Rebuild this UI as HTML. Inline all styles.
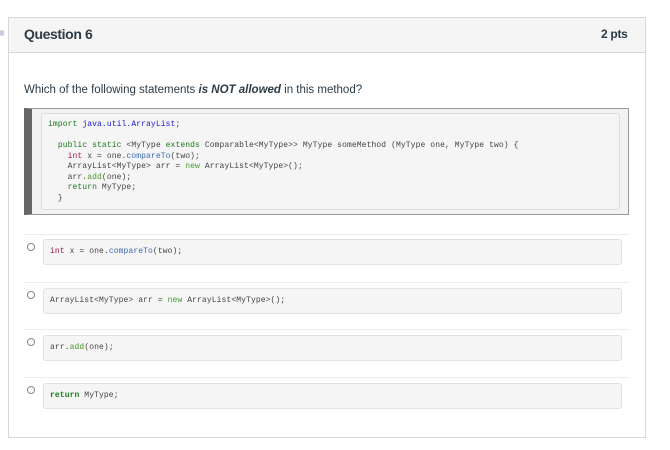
<!DOCTYPE html>
<html><head><style>
*{margin:0;padding:0;box-sizing:border-box}
body{width:670px;height:450px;background:#fff;font-family:"Liberation Sans",sans-serif;position:relative;overflow:hidden;color:#2d3b45}
.abs{position:absolute}
.card{left:8px;top:17px;width:638px;height:421px;border:1px solid #d6d9dc;background:#fff}
.hdr{left:9px;top:18px;width:636px;height:35px;background:#f5f5f5;border-bottom:1px solid #d6d9dc}
.code{font-family:"Liberation Mono",monospace;font-size:8px;color:#444;white-space:pre;line-height:10.5px;letter-spacing:0.1px}
.box{left:43px;width:579px;height:26px;background:#f5f5f5;border:1px solid #e2e2e2;border-radius:3px}
.sep{left:24px;width:605px;height:1px;background:#ececec}
.radio{left:27px;width:8px;height:8px;border:1px solid #888;border-radius:50%;background:#fff}
.k{color:#1a7a1a}.s{color:#1a1ad0}.t{color:#a01a4a}.f{color:#3a6ab0}.g{color:#4a9a2a}
</style></head><body>
<div class="abs" style="left:0;top:30px;width:4px;height:6px;background:#ccd;border-radius:2px"></div>
<div class="abs card"></div>
<div class="abs hdr"></div>
<div class="abs" style="left:24px;top:26px;font-size:14px;font-weight:bold;letter-spacing:-0.4px;color:#2d3b45">Question 6</div>
<div class="abs" style="left:601px;top:27px;font-size:12px;font-weight:bold;letter-spacing:-0.3px;color:#2d3b45">2 pts</div>
<div class="abs" style="left:24px;top:84px;font-size:11.5px;color:#2d3b45">Which of the following statements <b><i>is NOT allowed</i></b> in this method?</div>
<div class="abs" style="left:24px;top:108px;width:605px;height:107px;background:#f2f2f2;border:1px solid #999;border-left:8px solid #666"></div>
<div class="abs" style="left:41px;top:113px;width:579px;height:97px;background:#f5f5f5;border:1px solid #ddd;border-radius:3px"></div>
<div class="abs code" style="left:48px;top:120px"><span class="k">import</span> <span class="s">java.util.ArrayList</span>;

  <span class="k">public static</span> &lt;MyType <span class="k">extends</span> Comparable&lt;MyType&gt;&gt; MyType someMethod (MyType one, MyType two) {
    <span class="t">int</span> x = one.<span class="f">compareTo</span>(two);
    ArrayList&lt;MyType&gt; arr = <span class="g">new</span> ArrayList&lt;MyType&gt;();
    arr.<span class="g">add</span>(one);
    <span class="k">return</span> MyType;
  }</div>

<div class="abs sep" style="top:234px"></div>
<div class="abs radio" style="top:243px"></div>
<div class="abs box" style="top:239px"></div>
<div class="abs code" style="left:50px;top:247px"><span class="t">int</span> x = one.<span class="f">compareTo</span>(two);</div>

<div class="abs sep" style="top:282px"></div>
<div class="abs radio" style="top:291px"></div>
<div class="abs box" style="top:288px"></div>
<div class="abs code" style="left:50px;top:296px">ArrayList&lt;MyType&gt; arr = <span class="g">new</span> ArrayList&lt;MyType&gt;();</div>

<div class="abs sep" style="top:329px"></div>
<div class="abs radio" style="top:338px"></div>
<div class="abs box" style="top:335px"></div>
<div class="abs code" style="left:50px;top:343px">arr.<span class="g">add</span>(one);</div>

<div class="abs sep" style="top:377px"></div>
<div class="abs radio" style="top:386px"></div>
<div class="abs box" style="top:383px"></div>
<div class="abs code" style="left:50px;top:391px"><b class="k">return</b> MyType;</div>
</body></html>
